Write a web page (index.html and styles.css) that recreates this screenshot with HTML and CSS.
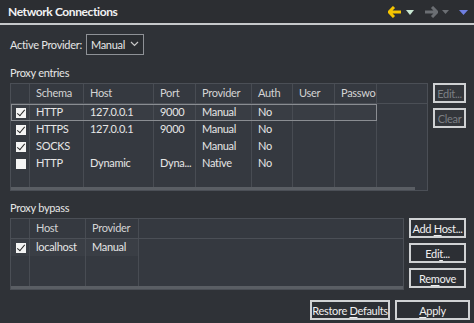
FILE: index.html
```html
<!DOCTYPE html>
<html lang="en">
<head>
    <meta charset="UTF-8">
    <title>Network Connections</title>
    <link rel="stylesheet" href="styles.css">
</head>
<body>
    <div class="titlebar">
        <div class="title">Network Connections</div>
        <div class="nav">
            <svg width="14" height="12" viewBox="0 0 14 12"><path d="M6 1 L1 6 L6 11 M1 6 H13" stroke="#f5c400" stroke-width="3" fill="none"/></svg>
            <svg width="8" height="5" viewBox="0 0 8 5"><path d="M0 0 H8 L4 5 Z" fill="#c9e6d3"/></svg>
            <svg class="gap" width="14" height="12" viewBox="0 0 14 12"><path d="M8 1 L13 6 L8 11 M13 6 H1" stroke="#6b6e73" stroke-width="3" fill="none"/></svg>
            <svg width="7" height="4" viewBox="0 0 7 4"><path d="M0 0 H7 L3.5 4 Z" fill="#6b6e73"/></svg>
            <svg class="gap" width="9" height="5" viewBox="0 0 9 5"><path d="M0 0 H9 L4.5 5 Z" fill="#6f7fe0"/></svg>
        </div>
    </div>

    <div class="content">
        <div class="provider-row">
            <span>Active Provider:</span>
            <div class="combo">Manual <svg width="9" height="6" viewBox="0 0 9 6"><path d="M1 1 L4.5 4.5 L8 1" stroke="#c8c8c8" stroke-width="1.2" fill="none"/></svg></div>
        </div>

        <div class="section-label">Proxy entries</div>
        <div class="section">
            <div class="table entries">
                <div class="row head">
                    <div class="c ck"></div><div class="c schema">Schema</div><div class="c host">Host</div><div class="c port">Port</div><div class="c prov">Provider</div><div class="c auth">Auth</div><div class="c user">User</div><div class="c pass">Passwo</div><div class="c fill"></div>
                </div>
                <div class="row">
                    <div class="sel">
                        <div class="c ck"><span class="box on"></span></div><div class="c schema">HTTP</div><div class="c host">127.0.0.1</div><div class="c port">9000</div><div class="c prov">Manual</div><div class="c auth">No</div><div class="c user"></div><div class="c pass"></div>
                    </div>
                    <div class="c fill"></div>
                </div>
                <div class="row">
                    <div class="c ck"><span class="box on"></span></div><div class="c schema">HTTPS</div><div class="c host">127.0.0.1</div><div class="c port">9000</div><div class="c prov">Manual</div><div class="c auth">No</div><div class="c user"></div><div class="c pass"></div><div class="c fill"></div>
                </div>
                <div class="row">
                    <div class="c ck"><span class="box on"></span></div><div class="c schema">SOCKS</div><div class="c host"></div><div class="c port"></div><div class="c prov">Manual</div><div class="c auth">No</div><div class="c user"></div><div class="c pass"></div><div class="c fill"></div>
                </div>
                <div class="row">
                    <div class="c ck"><span class="box"></span></div><div class="c schema">HTTP</div><div class="c host">Dynamic</div><div class="c port">Dyna...</div><div class="c prov">Native</div><div class="c auth">No</div><div class="c user"></div><div class="c pass"></div><div class="c fill"></div>
                </div>
                <div class="row empty">
                    <div class="c ck"></div><div class="c schema"></div><div class="c host"></div><div class="c port"></div><div class="c prov"></div><div class="c auth"></div><div class="c user"></div><div class="c pass"></div><div class="c fill"></div>
                </div>
                <div class="hscroll"></div>
            </div>
            <div class="buttons">
                <div class="btn disabled">Edit...</div>
                <div class="btn disabled">Clear</div>
            </div>
        </div>

        <div class="section-label bypass-label">Proxy bypass</div>
        <div class="section">
            <div class="table bypass">
                <div class="row head">
                    <div class="c ck"></div><div class="c bhost">Host</div><div class="c bprov">Provider</div><div class="c fill"></div>
                </div>
                <div class="row">
                    <div class="c ck"><span class="box on"></span></div><div class="c bhost">localhost</div><div class="c bprov">Manual</div><div class="c fill"></div>
                </div>
                <div class="row empty">
                    <div class="c ck"></div><div class="c bhost"></div><div class="c bprov"></div><div class="c fill"></div>
                </div>
                <div class="hscroll"></div>
            </div>
            <div class="buttons">
                <div class="btn">Add <u>H</u>ost...</div>
                <div class="btn">Edi<u>t</u>...</div>
                <div class="btn">Re<u>m</u>ove</div>
            </div>
        </div>

        <div class="footer">
            <div class="btn restore">Restore <u>D</u>efaults</div>
            <div class="btn apply"><u>A</u>pply</div>
        </div>
    </div>
</body>
</html>
```

FILE: styles.css
```css
body {
    margin: 0;
    width: 474px;
    height: 323px;
    overflow: hidden;
    background-color: #2f3237;
    color: #e6e6e6;
    font-family: Lato, "Noto Sans", sans-serif;
    font-size: 11px;
    letter-spacing: -0.3px;
}

.titlebar {
    height: 23px;
    display: flex;
    align-items: center;
    justify-content: space-between;
    padding: 0 6px 0 8px;
    background-color: #2c2e32;
    border-bottom: 2px solid #c6c8ca;
}

.title {
    font-weight: bold;
    font-size: 12px;
    letter-spacing: -0.4px;
    color: #f2f2f2;
}

.nav {
    display: flex;
    align-items: center;
    gap: 4px;
    padding-top: 1px;
}

.nav .gap {
    margin-left: 6px;
}

.content {
    padding: 8px 8px 0 10px;
}

.provider-row {
    display: flex;
    align-items: center;
    gap: 4px;
    height: 22px;
}

.combo {
    display: flex;
    align-items: center;
    justify-content: space-between;
    width: 48px;
    height: 19px;
    padding: 0 4px;
    border: 1px solid #8e9196;
    background-color: #2a2d31;
}

.section-label {
    margin-top: 9px;
    height: 19px;
    line-height: 17px;
}

.bypass-label {
    margin-top: 10px;
    height: 17px;
    line-height: 13px;
}

.section {
    display: flex;
    gap: 5px;
}

.table {
    box-sizing: border-box;
    flex: 1;
    background-color: #353940;
    border: 1px solid #4b4f56;
    display: flex;
    flex-direction: column;
}

.table.entries {
    height: 108px;
}

.table.bypass {
    height: 72px;
    flex: none;
    width: 394px;
}

.row {
    display: flex;
    height: 17px;
    line-height: 16px;
}

.row.head {
    height: 19px;
    line-height: 18px;
    color: #d4d4d4;
    border-bottom: 1px solid #4b4f56;
}

.sel {
    display: flex;
    outline: 1px solid #8a8d92;
    outline-offset: -1px;
    background-color: #393d44;
}

.row.empty {
    flex: 1;
}

.c {
    border-right: 1px solid #484c53;
    padding-left: 6px;
    box-sizing: border-box;
    white-space: nowrap;
    overflow: hidden;
}

.c.fill {
    flex: 1;
    border-right: none;
}

.ck { width: 19px; padding-left: 5px; display: flex; align-items: center; }
.schema { width: 54px; }
.host { width: 70px; }
.port { width: 42px; }
.prov { width: 56px; }
.auth { width: 41px; }
.user { width: 42px; }
.pass { width: 42px; }
.bhost { width: 56px; }
.bprov { width: 53px; }

.table.bypass .row:nth-child(2) .c:not(.fill) {
    background-color: #3a3e45;
}

.box {
    width: 10px;
    height: 10px;
    background-color: #f4f4f4;
    position: relative;
}

.box.on::after {
    content: "";
    position: absolute;
    left: 3px;
    top: 0px;
    width: 3px;
    height: 7px;
    border: solid #2a2a2a;
    border-width: 0 1.5px 1.5px 0;
    transform: rotate(40deg);
}

.hscroll {
    height: 3px;
    background-color: #5a5e64;
    margin-right: 12px;
}

.table.bypass .hscroll {
    margin-right: 0;
}

.buttons {
    display: flex;
    flex-direction: column;
    gap: 5px;
}

.btn {
    box-sizing: border-box;
    height: 20px;
    line-height: 17px;
    text-align: center;
    white-space: nowrap;
    border: 2px solid #d0d2d4;
    background-color: #2c2f34;
    color: #f0f0f0;
}

.section .btn {
    width: 57px;
}

.entries + .buttons .btn {
    width: 33px;
}

.btn.disabled {
    color: #7c7f84;
    border-color: #cfd1d3;
    background-color: #33363b;
}

.btn u {
    text-decoration-thickness: 1px;
    text-underline-offset: 2px;
}

.footer {
    display: flex;
    justify-content: flex-end;
    gap: 5px;
    margin-top: 10px;
    margin-right: -4px;
}

.btn.restore {
    width: 80px;
}

.btn.apply {
    width: 75px;
}
```
